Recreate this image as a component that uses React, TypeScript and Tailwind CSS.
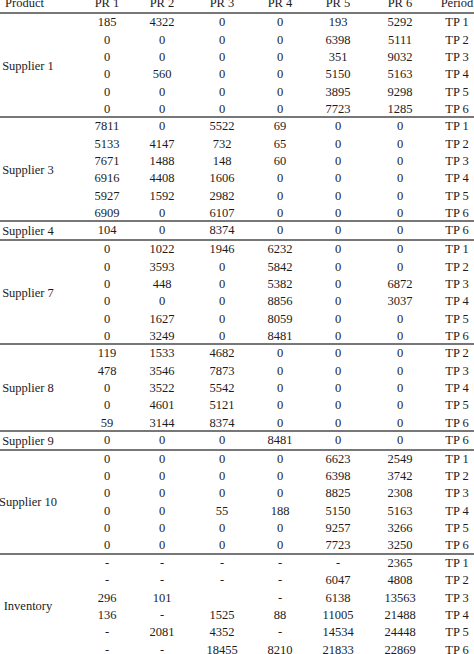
import React from 'react';

type Cell = string;

interface Group {
  label: string;
  rows: { values: Cell[]; period: string }[];
}

const r = (period: string, ...values: Cell[]) => ({ values, period });

const groups: Group[] = [
  {
    label: 'Supplier 1',
    rows: [
      r('TP 1', '185', '4322', '0', '0', '193', '5292'),
      r('TP 2', '0', '0', '0', '0', '6398', '5111'),
      r('TP 3', '0', '0', '0', '0', '351', '9032'),
      r('TP 4', '0', '560', '0', '0', '5150', '5163'),
      r('TP 5', '0', '0', '0', '0', '3895', '9298'),
      r('TP 6', '0', '0', '0', '0', '7723', '1285'),
    ],
  },
  {
    label: 'Supplier 3',
    rows: [
      r('TP 1', '7811', '0', '5522', '69', '0', '0'),
      r('TP 2', '5133', '4147', '732', '65', '0', '0'),
      r('TP 3', '7671', '1488', '148', '60', '0', '0'),
      r('TP 4', '6916', '4408', '1606', '0', '0', '0'),
      r('TP 5', '5927', '1592', '2982', '0', '0', '0'),
      r('TP 6', '6909', '0', '6107', '0', '0', '0'),
    ],
  },
  {
    label: 'Supplier 4',
    rows: [r('TP 6', '104', '0', '8374', '0', '0', '0')],
  },
  {
    label: 'Supplier 7',
    rows: [
      r('TP 1', '0', '1022', '1946', '6232', '0', '0'),
      r('TP 2', '0', '3593', '0', '5842', '0', '0'),
      r('TP 3', '0', '448', '0', '5382', '0', '6872'),
      r('TP 4', '0', '0', '0', '8856', '0', '3037'),
      r('TP 5', '0', '1627', '0', '8059', '0', '0'),
      r('TP 6', '0', '3249', '0', '8481', '0', '0'),
    ],
  },
  {
    label: 'Supplier 8',
    rows: [
      r('TP 2', '119', '1533', '4682', '0', '0', '0'),
      r('TP 3', '478', '3546', '7873', '0', '0', '0'),
      r('TP 4', '0', '3522', '5542', '0', '0', '0'),
      r('TP 5', '0', '4601', '5121', '0', '0', '0'),
      r('TP 6', '59', '3144', '8374', '0', '0', '0'),
    ],
  },
  {
    label: 'Supplier 9',
    rows: [r('TP 6', '0', '0', '0', '8481', '0', '0')],
  },
  {
    label: 'Supplier 10',
    rows: [
      r('TP 1', '0', '0', '0', '0', '6623', '2549'),
      r('TP 2', '0', '0', '0', '0', '6398', '3742'),
      r('TP 3', '0', '0', '0', '0', '8825', '2308'),
      r('TP 4', '0', '0', '55', '188', '5150', '5163'),
      r('TP 5', '0', '0', '0', '0', '9257', '3266'),
      r('TP 6', '0', '0', '0', '0', '7723', '3250'),
    ],
  },
  {
    label: 'Inventory',
    rows: [
      r('TP 1', '-', '-', '-', '-', '-', '2365'),
      r('TP 2', '-', '-', '-', '-', '6047', '4808'),
      r('TP 3', '296', '101', '', '-', '6138', '13563'),
      r('TP 4', '136', '-', '1525', '88', '11005', '21488'),
      r('TP 5', '-', '2081', '4352', '-', '14534', '24448'),
      r('TP 6', '-', '-', '18455', '8210', '21833', '22869'),
    ],
  },
];

const headers = ['PR 1', 'PR 2', 'PR 3', 'PR 4', 'PR 5', 'PR 6', 'Period'];

const rowGrid =
  'grid grid-cols-[54px_56px_64px_52px_64px_60px_54px] text-center';

export default function App() {
  return (
    <div
      className="w-[474px] h-[654px] overflow-hidden bg-white text-[#1c1c1c] text-[12.5px]"
      style={{ fontFamily: '"Liberation Serif", "Times New Roman", serif' }}
    >
      <div className="w-[484px]">
        {/* header */}
        <div className="flex h-[14.35px] leading-[7.5px]">
          <div className="w-[80px] pr-[31px] text-center">Product</div>
          <div className={rowGrid}>
            {headers.map((h) => (
              <div key={h}>{h}</div>
            ))}
          </div>
        </div>

        {groups.map((g) => (
          <div
            key={g.label}
            className="flex -mt-[2px] border-t-2 border-[#777777]"
          >
            <div className="w-[80px] pr-[24px] flex items-center justify-center whitespace-nowrap">
              {g.label}
            </div>
            <div className="flex flex-col">
              {g.rows.map((row, i) => (
                <div key={i} className={`${rowGrid} h-[17.35px] leading-[17.35px]`}>
                  {row.values.map((v, j) => (
                    <div key={j}>{v}</div>
                  ))}
                  <div>{row.period}</div>
                </div>
              ))}
            </div>
          </div>
        ))}
      </div>
    </div>
  );
}
